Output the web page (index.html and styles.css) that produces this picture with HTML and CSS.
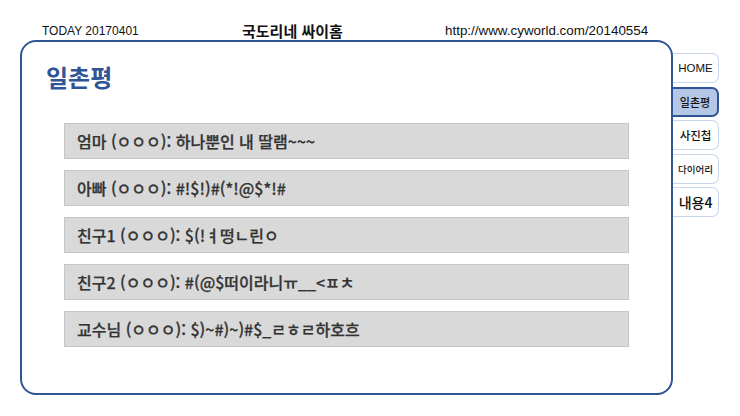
FILE: index.html
```html
<!DOCTYPE html>
<html lang="ko">
<head>
<meta charset="utf-8">
<title>국도리네 싸이홈</title>
<link rel="stylesheet" href="styles.css">
</head>
<body>
<div class="header">
  <span class="today">TODAY 20170401</span>
  <span class="site-title">국도리네 싸이홈</span>
  <span class="url">http://www.cyworld.com/20140554</span>
</div>
<div class="wrap">
  <div class="box">
    <h1 class="title">일촌평</h1>
    <ul class="list">
      <li class="row">엄마 (ㅇㅇㅇ): 하나뿐인 내 딸램~~~</li>
      <li class="row">아빠 (ㅇㅇㅇ): #!$!)#(*!@$*!#</li>
      <li class="row">친구1 (ㅇㅇㅇ): $(!ㅕ떵ㄴ린ㅇ</li>
      <li class="row">친구2 (ㅇㅇㅇ): #(@$떠이라니ㅠ__&lt;ㅍㅊ</li>
      <li class="row">교수님 (ㅇㅇㅇ): $)~#)~)#$_ㄹㅎㄹ하호흐</li>
    </ul>
  </div>
  <nav class="tabs">
    <div class="tab t-home">HOME</div>
    <div class="tab active t-il">일촌평</div>
    <div class="tab t-photo">사진첩</div>
    <div class="tab t-diary">다이어리</div>
    <div class="tab t-c4">내용4</div>
  </nav>
</div>
</body>
</html>
```
FILE: styles.css
```css
html, body {
  margin: 0;
  padding: 0;
  background: #ffffff;
}
body {
  font-family: "Liberation Sans", "Noto Sans CJK KR", sans-serif;
  color: #111;
  width: 740px;
  height: 416px;
  overflow: hidden;
}
.header {
  height: 40px;
  box-sizing: border-box;
  padding-top: 21px;
  display: flex;
  align-items: center;
  line-height: 18px;
}
.today {
  margin-left: 42px;
  width: 200px;
  font-size: 12px;
  color: #111;
}
.site-title {
  width: 203px;
  font-family: "Noto Sans CJK KR", sans-serif;
  font-size: 15px;
  font-weight: 700;
  color: #111;
}
.url {
  font-size: 13.4px;
  color: #111;
}
.wrap {
  display: flex;
  margin-left: 20px;
}
.box {
  position: relative;
  z-index: 2;
  width: 653px;
  height: 355px;
  box-sizing: border-box;
  border: 2px solid #2f5597;
  border-radius: 16px;
  padding: 18px 0 0 42px;
}
.title {
  margin: 0 0 30px -18px;
  font-family: "Noto Sans CJK KR", sans-serif;
  font-size: 24px;
  line-height: 33px;
  font-weight: 700;
  color: #2f5597;
}
.list {
  list-style: none;
  margin: 0;
  padding: 0;
  display: flex;
  flex-direction: column;
  gap: 11.5px;
}
.row {
  width: 565px;
  height: 35.5px;
  box-sizing: border-box;
  background: #d9d9d9;
  border: 1.5px solid #c6c6c6;
  display: flex;
  align-items: center;
  padding-left: 12px;
  font-family: "Noto Sans CJK KR", sans-serif;
  font-size: 16px;
  font-weight: 500;
  color: #333;
  line-height: 20px;
  -webkit-text-stroke: 0.25px #333;
}
.tabs {
  display: flex;
  flex-direction: column;
  gap: 3.5px;
  padding-top: 13px;
  margin-left: -2px;
}
.tab {
  width: 48px;
  height: 30px;
  box-sizing: border-box;
  border: 1px solid #c9d5ea;
  border-left: none;
  border-radius: 0 7px 7px 0;
  display: flex;
  align-items: center;
  justify-content: center;
  padding-left: 2px;
  font-family: "Noto Sans CJK KR", sans-serif;
  color: #111;
  background: #fff;
  line-height: 16px;
}
.tab.active {
  background: #b4c7e7;
  border: 2px solid #2f5597;
  border-left: none;
}
.t-home { font-family: "Liberation Sans", sans-serif; font-size: 11.5px; }
.t-il { font-size: 11px; font-weight: 500; }
.t-photo { font-size: 11.5px; font-weight: 500; }
.t-diary { font-size: 9.5px; font-weight: 500; }
.t-c4 { font-size: 14px; font-weight: 500; }
```
